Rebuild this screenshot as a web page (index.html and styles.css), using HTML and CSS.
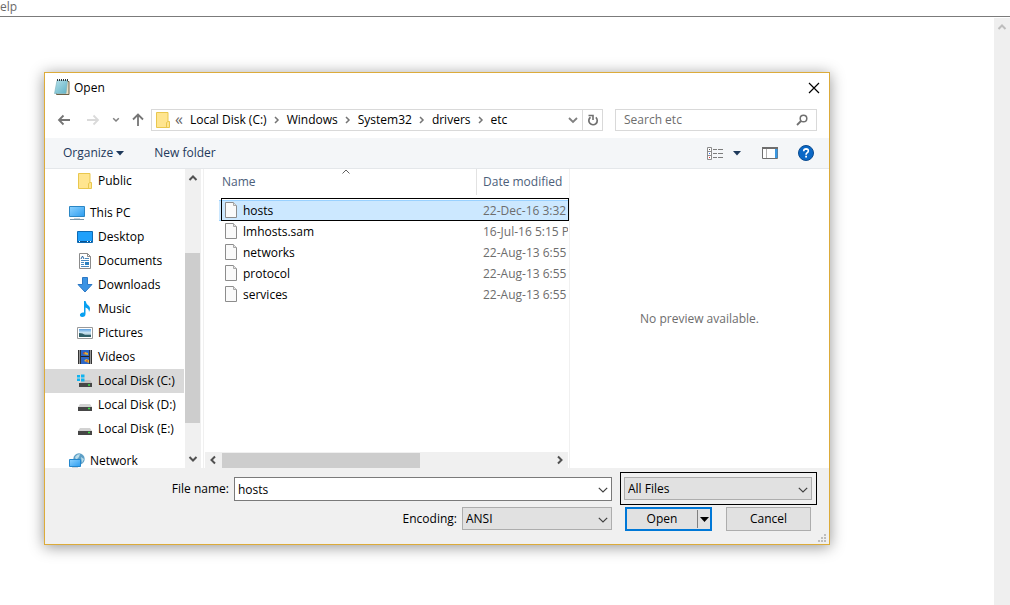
FILE: index.html
```html
<!DOCTYPE html>
<html lang="en">
<head>
<meta charset="utf-8">
<title>Open</title>
<link rel="stylesheet" href="styles.css">
</head>
<body>
<svg class="defs" aria-hidden="true">
  <defs>
    <linearGradient id="pad" x1="0" y1="0" x2="1" y2="1"><stop offset="0" stop-color="#b5e0ea"/><stop offset="1" stop-color="#5fb2c6"/></linearGradient>
    <linearGradient id="scr" x1="0" y1="0" x2="1" y2="1"><stop offset="0" stop-color="#8ed3ff"/><stop offset="1" stop-color="#2b9cf0"/></linearGradient>
    <linearGradient id="sky" x1="0" y1="0" x2="0" y2="1"><stop offset="0" stop-color="#5b9fe0"/><stop offset=".5" stop-color="#d5ebf5"/><stop offset="1" stop-color="#2b5a70"/></linearGradient>
    <symbol id="file" viewBox="0 0 12 16"><path d="M.5.5h8l3 3v12H.5z" fill="#fafafa" stroke="#8c8c8c"/><path d="M8.500.5v3h3" fill="#e4e4e4" stroke="#a8a8a8"/></symbol>
    <symbol id="folder" viewBox="0 0 14 16"><path d="M.5.5h11.500v9h1.500v6H.5z" fill="#ffe58f" stroke="#e9c74e"/><path d="M10.500 15.500v-5l1.500-1" fill="none" stroke="#e9c74e"/></symbol>
    <symbol id="disk" viewBox="0 0 16 16"><path d="M3 7h10l2 3H1z" fill="#d2d2d2"/><path d="M1 10h14v4H1z" fill="#464646"/><path d="M11 11.500h2" stroke="#3be045" stroke-width="1.500"/></symbol>
    <symbol id="down" viewBox="0 0 10 6"><path d="M.8.8 5 5 9.200.8" fill="none" stroke="currentColor" stroke-width="1.200"/></symbol>
    <symbol id="crumb" viewBox="0 0 6 8"><path d="M1 1l3 3-3 3" fill="none" stroke="#757575" stroke-width="1.500"/></symbol>
    <symbol id="scrollarrow" viewBox="0 0 10 8"><path d="M1.500 6 5 2.500 8.500 6" fill="none" stroke="currentColor" stroke-width="2"/></symbol>
  </defs>
</svg>
<div class="editor">
  <nav class="menubar"><button class="menu">elp</button></nav>
  <div class="page">
    <div class="page-scroll"><svg width="10" height="8"><use href="#scrollarrow"/></svg></div>
  </div>
</div>

<section class="dialog" role="dialog" aria-label="Open">
  <header class="titlebar">
    <svg width="16" height="17" viewBox="0 0 16 17"><path d="M13 2.500h2v13H2.500V14" fill="#e8dfc5" stroke="#6d6046"/><path d="M3 1.500h10.500L12 14.500H.5z" fill="url(#pad)" stroke="#79aebb" stroke-width=".6"/><path d="M3 1h11" stroke="#28343b" stroke-width="2" stroke-dasharray="1 1"/></svg>
    <h1>Open</h1>
    <button class="close" aria-label="Close"><svg width="12" height="12" viewBox="0 0 12 12"><path d="M1 1l10 10M11 1 1 11" stroke="#000" stroke-width="1.200"/></svg></button>
  </header>

  <div class="navrow">
    <div class="arrows">
      <button aria-label="Back"><svg width="14" height="12" viewBox="0 0 14 12"><path d="M13 6H2M6.500 1.500 2 6l4.500 4.500" fill="none" stroke="#757575" stroke-width="1.800"/></svg></button>
      <button aria-label="Forward"><svg width="14" height="12" viewBox="0 0 14 12"><path d="M1 6h11M7.500 1.500 12 6l-4.500 4.500" fill="none" stroke="#dadada" stroke-width="1.800"/></svg></button>
      <button aria-label="Recent locations"><svg width="8" height="6" viewBox="0 0 8 6"><path d="M1.200 1.200 4 4l2.800-2.800" fill="none" stroke="#808080" stroke-width="1.500"/></svg></button>
      <button aria-label="Up"><svg width="12" height="14" viewBox="0 0 12 14"><path d="M6 13V2M1 6.500 6 1.500l5 5" fill="none" stroke="#757575" stroke-width="1.800"/></svg></button>
    </div>
    <div class="address">
      <svg width="14" height="16"><use href="#folder"/></svg>
      <button class="more">«</button>
      <button>Local Disk (C:)</button><svg width="6" height="8"><use href="#crumb"/></svg>
      <button>Windows</button><svg width="6" height="8"><use href="#crumb"/></svg>
      <button>System32</button><svg width="6" height="8"><use href="#crumb"/></svg>
      <button>drivers</button><svg width="6" height="8"><use href="#crumb"/></svg>
      <button>etc</button>
      <button class="history" aria-label="Previous locations"><svg width="10" height="7" viewBox="0 0 10 7"><path d="M1 1l4 4 4-4" fill="none" stroke="#808080" stroke-width="1.800"/></svg></button>
      <button class="refresh" aria-label="Refresh"><svg width="12" height="13" viewBox="0 0 12 13"><path d="M3.500 3.200A4.200 4.200 0 1 0 8.800 3.400" fill="none" stroke="#707070" stroke-width="1.700"/><path d="M1.500 1.500h4.500v4.500" fill="none" stroke="#707070" stroke-width="1.600"/></svg></button>
    </div>
    <div class="search">
      <input type="search" placeholder="Search etc" aria-label="Search etc">
      <svg width="12" height="12" viewBox="0 0 12 12"><circle cx="7.500" cy="4.500" r="3.300" fill="none" stroke="#707070" stroke-width="1.500"/><path d="M5 7 1 11" stroke="#707070" stroke-width="1.800"/></svg>
    </div>
  </div>

  <div class="toolbar">
    <button>Organize <svg width="8" height="5" viewBox="0 0 8 5"><path d="M0 0h8L4 4.500z" fill="#1e395b"/></svg></button>
    <button class="newfolder">New folder</button>
    <button class="view" aria-label="Change view"><svg width="16" height="13" viewBox="0 0 16 13"><path d="M.5.5h4v12h-4zM.5 4.500h4M.5 8.500h4" fill="#fff" stroke="#8c8c8c"/><path d="M6 2.500h4m1 0h5M6 6.500h4m1 0h5M6 10.500h4m1 0h5" stroke="#7c7c7c"/><path d="M2 6.500h1" stroke="#37f"/><path d="M2 10.500h1" stroke="#e33"/><path d="M2 2.500h1" stroke="#555"/></svg></button>
    <button class="viewmenu" aria-label="View options"><svg width="8" height="5" viewBox="0 0 8 5"><path d="M0 0h8L4 4.500z" fill="#1e395b"/></svg></button>
    <button class="previewtoggle" aria-label="Preview pane"><svg width="16" height="12" viewBox="0 0 16 12"><path d="M.5.5h15v11H.5z" fill="#fff" stroke="#6e6e6e"/><path d="M0 1h16" stroke="#6e6e6e" stroke-width="2"/><path d="M4.500 2v9" stroke="#b0b0b0"/><path d="M13 2h2.500v9H13z" fill="#3a97e0"/></svg></button>
    <button aria-label="Help"><svg width="16" height="16" viewBox="0 0 16 16"><circle cx="8" cy="8" r="7.500" fill="#0a68c6" stroke="#0b4b8f"/><path d="M5.700 6.200Q5.800 3.900 8.100 3.900 10.400 4 10.300 6 10.200 7.100 9 7.900 8.100 8.500 8.100 9.700" fill="none" stroke="#fff" stroke-width="1.700"/><path d="M7.200 10.800h1.800v1.700H7.200z" fill="#fff"/></svg></button>
  </div>

  <div class="content">
    <aside class="sidebar">
      <ul class="tree">
        <li class="child"><svg width="16" height="16" viewBox="0 0 16 16"><use href="#folder" x="1" width="14" height="16"/></svg>Public</li>
        <li class="root"><svg width="16" height="16" viewBox="0 0 16 16"><path d="M.5 1.500h15v10H.5z" fill="url(#scr)" stroke="#2b86c4"/><path d="M5 13h6v1H5z" fill="#c8d4dc"/><path d="M1 14.500h14" stroke="#7a96a8"/></svg>This PC</li>
        <li class="child"><svg width="16" height="16" viewBox="0 0 16 16"><path d="M.5 2.500h15v11H.5z" fill="#1fa0fb" stroke="#0e6bb5"/><path d="M1 12.500h14" stroke="#0a5290"/><path d="M2 12.500h1m7 0h1m2 0h1" stroke="#fff"/></svg>Desktop</li>
        <li class="child"><svg width="16" height="16" viewBox="0 0 16 16"><path d="M2.500.5h8l3 3v12h-11z" fill="#fff" stroke="#8b8b8b"/><path d="M10.500.5v3h3" fill="none" stroke="#8b8b8b"/><path d="M8 5.500h4M4 7.500h8M4 9.500h3m1 0h4M4 11.500h3m1 0h4M4 13.500h8" stroke="#4a8bc0"/><path d="M8 9h4v3H8z" fill="#2a7fc0"/><path d="M4 6 5.500 3 7 6" fill="none" stroke="#2a66a0"/></svg>Documents</li>
        <li class="child"><svg width="16" height="16" viewBox="0 0 16 16"><path d="M5.500.5h5v7h4.500L8 15 1 7.500h4.500z" fill="#3a93e4" stroke="#2c78c4"/></svg>Downloads</li>
        <li class="child"><svg width="16" height="16" viewBox="0 0 16 16"><path d="M7 0h1.500q.5 3 3.500 5 2 2.500 0 6 .2-3.500-3.500-4.500V13q0 3-3.300 3Q2.500 15.700 3 13.200 4 11 7 11.500z" fill="#08a0f0"/></svg>Music</li>
        <li class="child"><svg width="16" height="16" viewBox="0 0 16 16"><path d="M.5 2.500h15v11H.5z" fill="#fff" stroke="#9a9a9a"/><path d="M2 4h12v8H2z" fill="url(#sky)"/><path d="M2 8q4 0 6 2h6v2H2z" fill="#2f5f68"/></svg>Pictures</li>
        <li class="child"><svg width="16" height="16" viewBox="0 0 16 16"><path d="M1 1h14v14H1z" fill="#333"/><path d="M4 1h8v14H4z" fill="#2b66c8"/><path d="M4 7.500h8" stroke="#222"/><path d="M6 5l2-2 3 1v2zM7 12l2-2 3 1v3z" fill="#e5b032"/><path d="M2.500 1.500v14M13.500 1.500v14" stroke="#fff" stroke-dasharray="1 1"/><path d="M6 4h2M9 12h2" stroke="#b9362c"/></svg>Videos</li>
        <li class="child selected"><svg width="16" height="16" viewBox="0 0 16 16"><path d="M5 7h8l2 3H3z" fill="#c0c0c0"/><path d="M2 10h13v4H2z" fill="#464646"/><path d="M11 12h2" stroke="#3be045" stroke-width="1.500"/><path d="M0 2h3v2.500H0zM4 1.500h3.500v3H4zM0 5.500h3V8H0zM4 5.500h3.500v3H4z" fill="#10b4f0"/></svg>Local Disk (C:)</li>
        <li class="child"><svg width="16" height="16"><use href="#disk"/></svg>Local Disk (D:)</li>
        <li class="child"><svg width="16" height="16"><use href="#disk"/></svg>Local Disk (E:)</li>
        <li class="root"><svg width="16" height="16" viewBox="0 0 16 16"><circle cx="10" cy="6" r="5.700" fill="#5d9fc6"/><path d="M6 4q2-3 5-3l-1 3-3 3zM12 4l3 2-2 4z" fill="#b9dcea"/><path d="M.5 6.500h11v7H.5z" fill="url(#scr)" stroke="#2386cc"/><path d="M3 15h6" stroke="#9ab" stroke-width="1"/></svg>Network</li>
      </ul>
      <div class="vscroll">
        <svg width="10" height="8"><use href="#scrollarrow"/></svg>
        <div class="vtrack"><div class="vthumb"></div></div>
        <svg class="flip" width="10" height="8"><use href="#scrollarrow"/></svg>
      </div>
    </aside>

    <main class="files">
      <div class="tablewrap">
        <svg class="sort" width="8" height="5" viewBox="0 0 8 5"><path d="M.5 4.500 4 1l3.500 3.500" fill="none" stroke="#606060"/></svg>
        <table>
          <colgroup><col><col class="datecol"></colgroup>
          <thead><tr><th>Name</th><th class="date"><span>Date modified</span></th></tr></thead>
          <tbody>
            <tr class="selected"><td><svg width="12" height="16"><use href="#file"/></svg>hosts</td><td class="date">22-Dec-16 3:32 PM</td></tr>
            <tr><td><svg width="12" height="16"><use href="#file"/></svg>lmhosts.sam</td><td class="date">16-Jul-16 5:15 PM</td></tr>
            <tr><td><svg width="12" height="16"><use href="#file"/></svg>networks</td><td class="date">22-Aug-13 6:55 PM</td></tr>
            <tr><td><svg width="12" height="16"><use href="#file"/></svg>protocol</td><td class="date">22-Aug-13 6:55 PM</td></tr>
            <tr><td><svg width="12" height="16"><use href="#file"/></svg>services</td><td class="date">22-Aug-13 6:55 PM</td></tr>
          </tbody>
        </table>
        <div class="mark"></div>
      </div>
      <div class="hscroll">
        <svg class="left" width="10" height="8"><use href="#scrollarrow"/></svg>
        <div class="htrack"><div class="hthumb"></div></div>
        <svg class="right" width="10" height="8"><use href="#scrollarrow"/></svg>
      </div>
    </main>

    <div class="preview">No preview available.</div>
  </div>

  <footer class="footer">
    <div class="field name">
      <label for="filename">File name:</label>
      <div class="combo grow"><input id="filename" type="text" value="hosts"><svg width="10" height="6"><use href="#down"/></svg></div>
    </div>
    <div class="filter">
      <div class="combo gray"><select aria-label="File type"><option>All Files</option></select><svg width="10" height="6"><use href="#down"/></svg></div>
    </div>
    <div class="field encoding">
      <label for="encoding">Encoding:</label>
      <div class="combo gray"><select id="encoding"><option>ANSI</option></select><svg width="10" height="6"><use href="#down"/></svg></div>
    </div>
    <div class="actions">
      <div class="split"><button>Open</button><button class="drop" aria-label="Open options"><svg width="9" height="5" viewBox="0 0 9 5"><path d="M0 0h9L4.500 5z" fill="#000"/></svg></button></div>
      <button class="cancel">Cancel</button>
    </div>
    <svg class="grip" width="8" height="8" viewBox="0 0 8 8"><path d="M6 0h2v2H6zM3 3h2v2H3zM6 3h2v2H6zM0 6h2v2H0zM3 6h2v2H3zM6 6h2v2H6z" fill="#bdbdbd"/></svg>
  </footer>
</section>
</body>
</html>
```
FILE: styles.css
```css
* { box-sizing: border-box; }
body {
  margin: 0;
  height: 100vh;
  overflow: hidden;
  background: #fff;
  color: #000;
  font: 12px/16px "Open Sans", "Noto Sans", sans-serif;
}
button, input, select { font: inherit; color: inherit; margin: 0; padding: 0; border: 0; background: none; border-radius: 0; outline: 0; }
button { display: flex; align-items: center; justify-content: center; white-space: nowrap; }
svg { display: block; flex: none; }
.defs { position: absolute; width: 0; height: 0; }

.editor { height: 100%; display: flex; flex-direction: column; }
.menubar { display: flex; height: 17px; padding-bottom: 3px; border-bottom: 1px solid #7b7b7b; color: #6a6a6a; }
.page { flex: 1; display: flex; justify-content: flex-end; padding-top: 1px; }
.page-scroll { width: 16px; padding: 5px 3px; background: #efefef; color: #bdbdbd; }

.dialog {
  position: absolute;
  left: 44px;
  right: 180px;
  top: 72px;
  border: 1px solid #dcab3a;
  background: #fff;
  box-shadow: 0 2px 14px rgba(0, 0, 0, .42);
}
.titlebar { display: flex; align-items: center; gap: 4px; height: 30px; padding: 0 9px 1px; }
.titlebar h1 { margin: 0; font-size: 12px; font-weight: 400; }
.close { margin-left: auto; }

.navrow { display: flex; align-items: center; height: 35px; padding: 0 12px 1px; }
.arrows { display: flex; align-items: center; gap: 12px; width: 94px; }
.arrows button:nth-child(2) { margin-left: 3px; }
.address { display: flex; align-items: center; flex: 1; height: 22px; border: 1px solid #d9d9d9; padding-left: 4px; }
.address button { padding: 0 7px; }
.address .more { padding: 0 0 2px 5px; color: #666; font-size: 16px; }
.address .history { margin-left: auto; padding: 0 4px; }
.address .refresh { align-self: stretch; width: 20px; padding: 0; border-left: 1px solid #d9d9d9; }
.search { display: flex; align-items: center; width: 202px; height: 22px; margin-left: 12px; padding: 0 8px; border: 1px solid #d9d9d9; }
.search input { flex: 1; min-width: 0; }
.search input::placeholder { color: #6d6d6d; opacity: 1; }

.toolbar { display: flex; align-items: center; height: 31px; padding: 0 15px 0 18px; background: #f4f6f8; border-bottom: 1px solid #e4e7ea; color: #1e395b; }
.toolbar button { gap: 3px; }
.toolbar .newfolder { margin-left: 30px; }
.toolbar .view { margin-left: auto; }
.toolbar .viewmenu { margin: 0 21px 0 10px; }
.toolbar .previewtoggle { margin-right: 20px; }

.content { display: flex; height: 299px; }
.sidebar { display: flex; width: 159px; border-right: 1px solid #f0f0f0; }
.tree { flex: 1; margin: 0; padding: 0; list-style: none; overflow: hidden; }
.tree li { display: flex; align-items: center; gap: 5px; height: 24px; white-space: nowrap; }
.tree .child { padding-left: 32px; }
.tree .root { padding-left: 24px; margin-top: 8px; }
.tree .selected { background: #d9d9d9; }
.vscroll { display: flex; flex-direction: column; align-items: center; width: 16px; margin: 0 2px 0 1px; padding: 5px 0; background: #f0f0f0; color: #505050; }
.vtrack { display: flex; flex-direction: column; justify-content: flex-end; flex: 1; width: 100%; padding-bottom: 32px; }
.vthumb { width: 15px; height: 170px; background: #cdcdcd; }
.flip { transform: rotate(180deg); }

.files { display: flex; flex-direction: column; width: 366px; border-right: 1px solid #f0f0f0; }
.tablewrap { position: relative; flex: 1; overflow: hidden; padding: 0 1px 0 15px; }
.sort { position: absolute; left: 138px; top: 0; }
table { width: 100%; border-collapse: collapse; table-layout: fixed; }
.datecol { width: 92px; }
th { height: 31px; padding: 0 0 5px 3px; color: #4c607a; font-weight: 400; text-align: left; white-space: nowrap; }
th.date { padding: 0; vertical-align: top; }
th.date span { display: block; height: 26px; padding: 5px 6px; border-left: 1px solid #e2e2e2; }
td { height: 21px; padding: 0 0 0 6px; white-space: nowrap; overflow: hidden; }
td svg { display: inline-block; vertical-align: -3px; margin-right: 6px; }
td.date { padding-left: 7px; color: #6d6d6d; }
tbody .selected td { background: #cce8ff; box-shadow: inset 0 1px #99d1ff, inset 0 -1px #99d1ff; }
.mark { position: absolute; left: 17px; right: 0; top: 29px; height: 23px; border: 1px solid #000; }
.hscroll { display: flex; align-items: center; height: 16px; margin: 0 1px; padding: 0 3px; background: #f0f0f0; color: #505050; }
.htrack { flex: 1; padding: 0 4px; }
.hthumb { width: 198px; height: 15px; background: #cdcdcd; }
.left { transform: rotate(-90deg); }
.right { transform: rotate(90deg); }
.preview { flex: 1; display: flex; align-items: center; justify-content: center; color: #6d6d6d; }

.footer { position: relative; display: grid; grid-template-columns: 1fr 197px; column-gap: 8px; row-gap: 2px; padding: 4px 12px 13px; background: #f0f0f0; }
.field { display: flex; align-items: center; justify-content: flex-end; gap: 5px; }
.field label { flex: none; }
.name { padding-top: 1px; }
.name label { width: 172px; text-align: right; }
.grow { flex: 1; }
.combo { position: relative; height: 24px; border: 1px solid #7a7a7a; background: #fff; }
.combo input, .combo select { display: block; width: 100%; height: 100%; padding: 0 22px 0 3px; appearance: none; }
.combo svg { position: absolute; right: 3px; top: 9px; pointer-events: none; color: #404040; }
.gray { height: 23px; border-color: #adadad; background: #e1e1e1; }
.encoding { padding-bottom: 1px; }
.encoding .combo { width: 150px; }
.filter { padding: 4px 4px 4px 3px; border: 1px solid #000; }
.actions { display: flex; gap: 14px; padding: 0 6px 0 5px; }
.split { display: flex; flex: 1; height: 24px; border: 2px solid #0078d7; background: #e1e1e1; }
.split button { flex: 1; }
.split .drop { flex: none; width: 13px; margin: 1px 0; border-left: 1px solid #808080; }
.cancel { flex: 1; height: 24px; border: 1px solid #adadad; background: #e1e1e1; }
.grip { position: absolute; right: 3px; bottom: 2px; }
```
